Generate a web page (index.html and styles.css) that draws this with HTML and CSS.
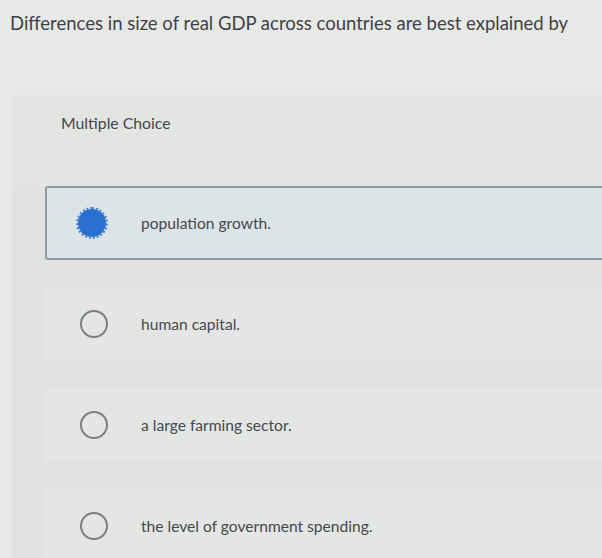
FILE: index.html
```html
<!DOCTYPE html>
<html>
<head>
<meta charset="utf-8">
<link rel="stylesheet" href="styles.css">
</head>
<body>
<p class="question">Differences in size of real GDP across countries are best explained by</p>
<div class="panel">
  <div class="label">Multiple Choice</div>
  <div class="options">
    <div class="option selected"><span class="radio-box"><span class="radio"></span></span><span class="text">population growth.</span></div>
    <div class="option"><span class="radio-box"><span class="radio"></span></span><span class="text">human capital.</span></div>
    <div class="option"><span class="radio-box"><span class="radio"></span></span><span class="text">a large farming sector.</span></div>
    <div class="option"><span class="radio-box"><span class="radio"></span></span><span class="text">the level of government spending.</span></div>
  </div>
</div>
</body>
</html>
```
FILE: styles.css
```css
html, body {
  margin: 0;
  padding: 0;
  background: #e7e9e7;
  font-family: Lato, "Liberation Sans", sans-serif;
  color: #45464a;
}
body {
  width: 602px;
  height: 558px;
  overflow: hidden;
}
.question {
  margin: 0;
  padding: 12px 0 0 10px;
  font-size: 18.5px;
  line-height: 23px;
  height: 83px;
  color: #404145;
}
.panel {
  margin-left: 12px;
  background: #e3e5e3;
  padding-top: 17px;
}
.label {
  padding-left: 49px;
  font-size: 15.8px;
  line-height: 21px;
  height: 74px;
}
.options {
  display: flex;
  flex-direction: column;
  gap: 27px;
  background: #e1e3e1;
  padding-bottom: 30px;
}
.option {
  display: flex;
  align-items: center;
  height: 74px;
  box-sizing: border-box;
  margin-left: 33px;
  padding-left: 29px;
  border: 2px solid transparent;
  background: #e4e6e4;
  margin-right: -20px;
}
.option.selected {
  background: #dce4e7;
  border-color: #8e9aa4;
  border-radius: 3px;
}
.radio-box {
  width: 32px;
  height: 32px;
  display: flex;
  align-items: center;
  justify-content: center;
  flex: none;
}
.radio {
  width: 24px;
  height: 24px;
  border: 2px solid #7b7e82;
  border-radius: 50%;
  flex: none;
  margin-left: 3px;
}
.selected .radio {
  width: 28px;
  height: 28px;
  border: none;
  margin-left: 0;
  background: #2a6fd2;
  outline: 2px dotted #4a82cc;
  outline-offset: 0px;
}
.text {
  margin-left: 33px;
  font-size: 15.6px;
  color: #47484c;
}
```
